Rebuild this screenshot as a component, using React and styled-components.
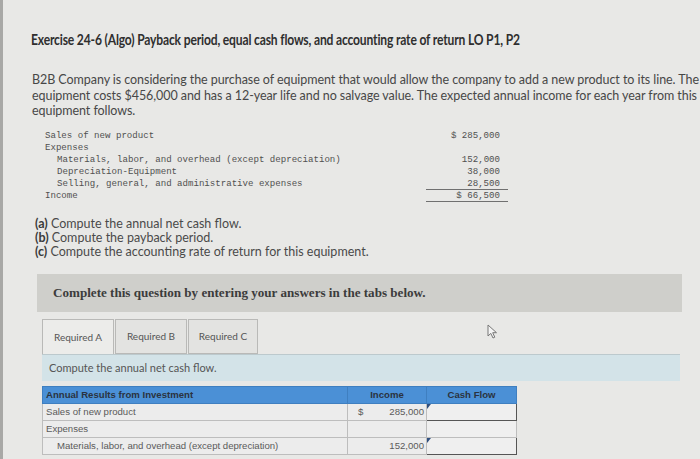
import React from "react";
import styled, { createGlobalStyle } from "styled-components";

const Global = createGlobalStyle`
  html, body { margin: 0; padding: 0; }
  body {
    background: #e7e7e5;
    font-family: Lato, "Open Sans", sans-serif;
    color: #3a3a3a;
    overflow: hidden;
  }
`;

const Page = styled.div`
  width: 700px;
  height: 459px;
  box-sizing: border-box;
  border-left: 3px solid #a8a8a6;
  background: #e8e8e6;
  padding: 28px 0 0 28px;
  position: relative;
  overflow: hidden;
`;

const Title = styled.h1`
  margin: 0;
  font-size: 15px;
  font-weight: 700;
  color: #2f2f2f;
  white-space: nowrap;
  line-height: 22px;
  letter-spacing: -0.2px;
  transform: scaleX(0.805);
  transform-origin: left center;
`;

const Para = styled.p`
  margin: 22px 0 0 1px;
  font-size: 12.5px;
  line-height: 15.5px;
  color: #474747;
  white-space: nowrap;
  letter-spacing: -0.06px;
`;

const MonoGrid = styled.div`
  margin: 11px 0 0 14px;
  display: grid;
  grid-template-columns: 381px 82px;
  font-family: "Liberation Mono", "DejaVu Sans Mono", monospace;
  font-size: 9.1px;
  line-height: 12px;
  color: #505050;
`;

const MonoLabel = styled.div`
  white-space: pre;
  padding-left: ${(p) => (p.$indent ? "12px" : "0")};
`;

const MonoValue = styled.div`
  text-align: right;
  padding-right: 8px;
  white-space: pre;
  border-bottom: ${(p) => (p.$rule ? "1px solid #707070" : "1px solid transparent")};
  line-height: 11px;
`;

const Questions = styled.div`
  margin: 15px 0 0 4px;
  font-size: 12.5px;
  line-height: 14px;
  color: #4a4a4a;
  b { font-weight: 700; color: #3a3a3a; }
`;

const Notice = styled.div`
  margin: 15px 0 0 6px;
  width: 645px;
  height: 38px;
  background: #cfcfcb;
  display: flex;
  align-items: center;
  padding-left: 16px;
  box-sizing: border-box;
  font-family: "Liberation Serif", "DejaVu Serif", serif;
  font-weight: 700;
  font-size: 13.1px;
  color: #3c3c3c;
`;

const Tabs = styled.div`
  margin: 7px 0 0 11px;
  display: flex;
  height: 35px;
`;

const Tab = styled.div`
  width: ${(p) => p.$w}px;
  box-sizing: border-box;
  border: 1px solid #b9b9b7;
  border-bottom: ${(p) => (p.$active ? "none" : "1px solid #b9b9b7")};
  background: ${(p) => (p.$active ? "#ececea" : "#e3e3e1")};
  display: flex;
  align-items: center;
  justify-content: center;
  font-size: 10px;
  color: #555;
  margin-right: 1px;
`;

const Prompt = styled.div`
  margin-left: 11px;
  width: 638px;
  height: 27px;
  box-sizing: border-box;
  background: #d3e3e8;
  border-top: 1px solid #bcc9cd;
  padding-left: 7px;
  display: flex;
  align-items: center;
  font-size: 11px;
  color: #555;
`;

const Table = styled.table`
  margin: 5px 0 0 11px;
  border-collapse: collapse;
  font-family: "Liberation Sans", Arial, sans-serif;
  font-size: 9.6px;
  color: #5a5a5a;
  table-layout: fixed;
`;

const HeadCell = styled.th`
  background: #4b90d6;
  color: #2a3340;
  font-weight: 700;
  height: 16px;
  padding: 0 3px;
  border: 1px solid #3f7fc0;
  text-align: ${(p) => p.$align || "center"};
`;

const Cell = styled.td`
  height: 16px;
  padding: 0 3px;
  border: 1px solid #bdbdbd;
  background: #ececec;
  white-space: nowrap;
  padding-left: ${(p) => (p.$indent ? "14px" : "3px")};
`;

const AmountCell = styled.td`
  height: 16px;
  border: 1px solid #bdbdbd;
  background: #ececec;
  padding: 0 2px 0 10px;
`;

const Amount = styled.div`
  display: flex;
  justify-content: space-between;
`;

const InputCell = styled.td`
  height: 16px;
  padding: 0;
  border: ${(p) => (p.$input ? "1.5px solid #555" : "1px solid #bdbdbd")};
  background: #efefef;
  position: relative;
`;

const Marker = styled.span`
  position: absolute;
  left: 0;
  top: 0;
  width: 0;
  height: 0;
  border-top: 5px solid #2f4f7f;
  border-right: 4px solid transparent;
`;

const Cursor = styled.svg`
  position: absolute;
  left: 484px;
  top: 324px;
`;

export default function App() {
  return (
    <>
      <Global />
      <Page>
        <Title>
          Exercise 24-6 (Algo) Payback period, equal cash flows, and accounting rate of return LO P1, P2
        </Title>
        <Para>
          B2B Company is considering the purchase of equipment that would allow the company to add a new product to its line. The
          <br />
          equipment costs $456,000 and has a 12-year life and no salvage value. The expected annual income for each year from this
          <br />
          equipment follows.
        </Para>
        <MonoGrid>
          <MonoLabel>Sales of new product</MonoLabel>
          <MonoValue>$ 285,000</MonoValue>
          <MonoLabel>Expenses</MonoLabel>
          <MonoValue> </MonoValue>
          <MonoLabel $indent>Materials, labor, and overhead (except depreciation)</MonoLabel>
          <MonoValue>152,000</MonoValue>
          <MonoLabel $indent>Depreciation-Equipment</MonoLabel>
          <MonoValue>38,000</MonoValue>
          <MonoLabel $indent>Selling, general, and administrative expenses</MonoLabel>
          <MonoValue $rule>28,500</MonoValue>
          <MonoLabel>Income</MonoLabel>
          <MonoValue $rule>$ 66,500</MonoValue>
        </MonoGrid>
        <Questions>
          <div><b>(a)</b> Compute the annual net cash flow.</div>
          <div><b>(b)</b> Compute the payback period.</div>
          <div><b>(c)</b> Compute the accounting rate of return for this equipment.</div>
        </Questions>
        <Notice>Complete this question by entering your answers in the tabs below.</Notice>
        <Tabs>
          <Tab $w={72} $active>Required A</Tab>
          <Tab $w={72}>Required B</Tab>
          <Tab $w={70}>Required C</Tab>
        </Tabs>
        <Prompt>Compute the annual net cash flow.</Prompt>
        <Table>
          <colgroup>
            <col style={{ width: 305 }} />
            <col style={{ width: 79 }} />
            <col style={{ width: 90 }} />
          </colgroup>
          <thead>
            <tr>
              <HeadCell $align="left">Annual Results from Investment</HeadCell>
              <HeadCell>Income</HeadCell>
              <HeadCell>Cash Flow</HeadCell>
            </tr>
          </thead>
          <tbody>
            <tr>
              <Cell>Sales of new product</Cell>
              <AmountCell><Amount><span>$</span><span>285,000</span></Amount></AmountCell>
              <InputCell $input><Marker /></InputCell>
            </tr>
            <tr>
              <Cell>Expenses</Cell>
              <AmountCell />
              <InputCell />
            </tr>
            <tr>
              <Cell $indent>Materials, labor, and overhead (except depreciation)</Cell>
              <AmountCell><Amount><span></span><span>152,000</span></Amount></AmountCell>
              <InputCell $input><Marker /></InputCell>
            </tr>
          </tbody>
        </Table>
        <Cursor width="12" height="16" viewBox="0 0 12 16">
          <path d="M1 1 L1 12 L3.8 9.4 L6 14 L7.8 13.2 L5.7 8.7 L9.5 8.7 Z" fill="#f4f4f4" stroke="#777" strokeWidth="1" strokeLinejoin="round" />
        </Cursor>
      </Page>
    </>
  );
}
